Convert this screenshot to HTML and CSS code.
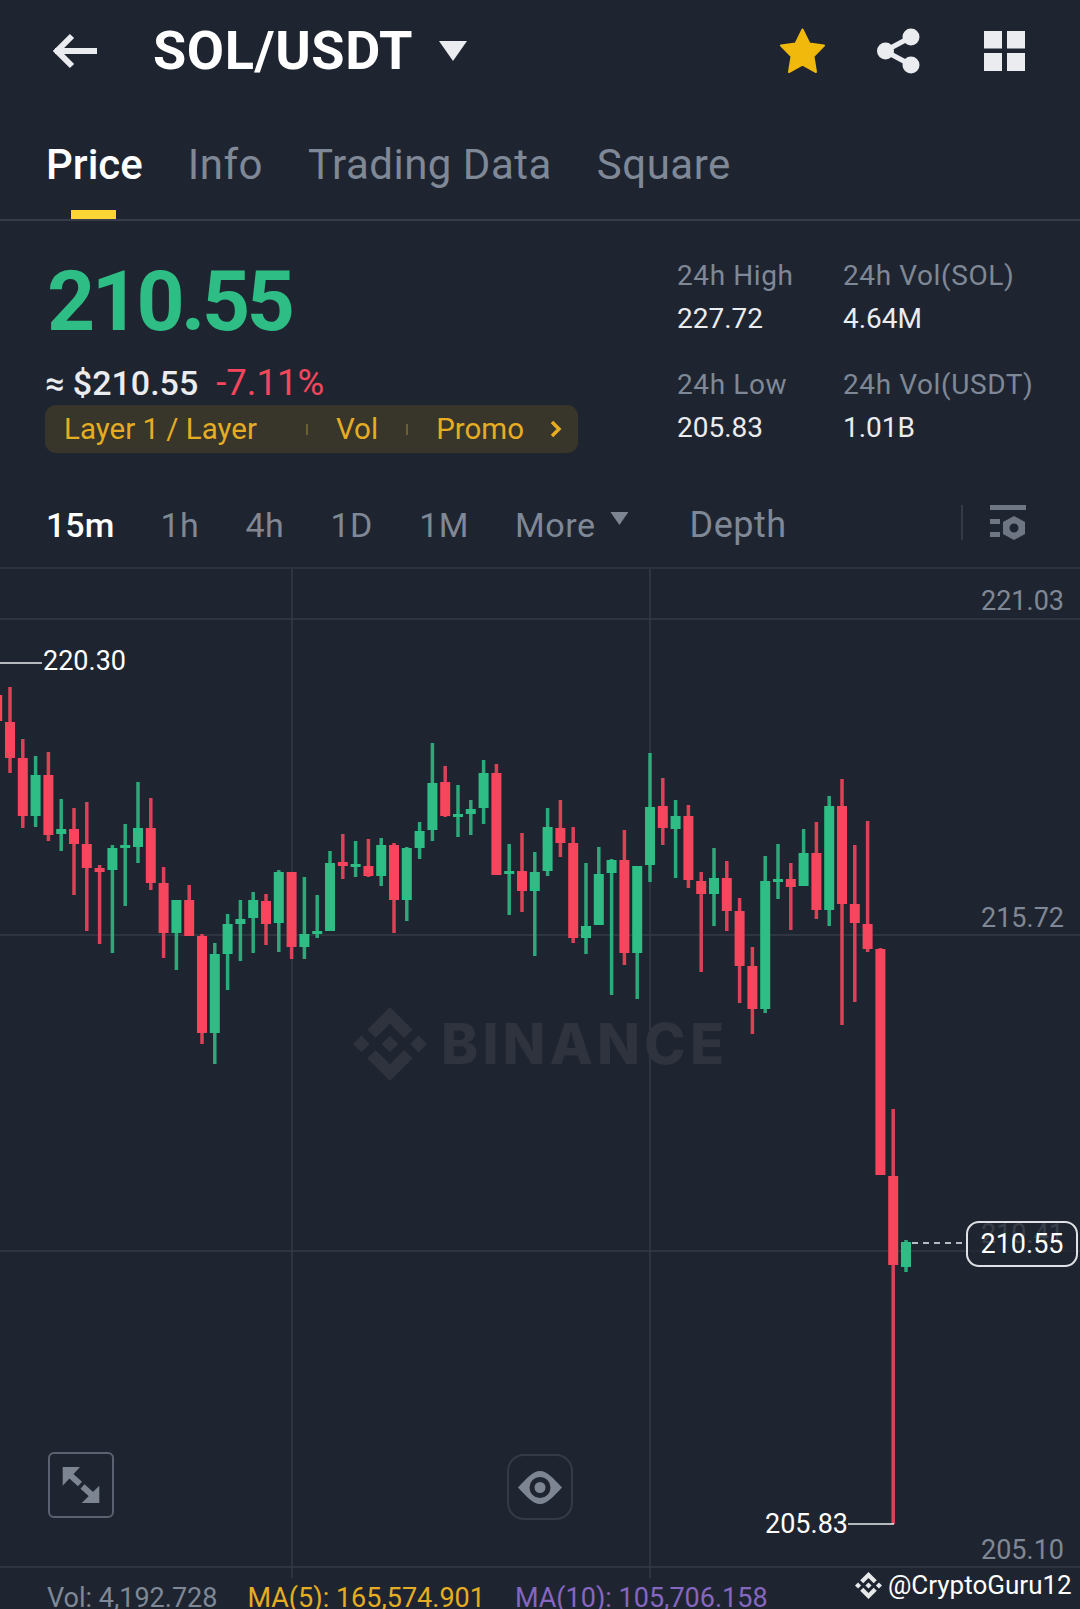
FILE: index.html
```html
<!DOCTYPE html>
<html lang="en">
<head>
    <meta charset="UTF-8">
    <meta name="viewport" content="width=device-width, initial-scale=1.0">
    <title>SOL/USDT</title>
    <link rel="stylesheet" href="styles.css">
</head>
<body>
    <svg class="defs" width="0" height="0">
        <symbol id="bnb" viewBox="0 0 24 24">
            <path d="M16.624 13.9202l2.7175 2.7154-7.353 7.353-7.353-7.352 2.7175-2.7164 4.6355 4.6595 4.6356-4.6595zm4.6366-4.6366L24 12l-2.7154 2.7164L18.5682 12l2.6924-2.7164zm-9.272.001l2.7163 2.6914-2.7164 2.7174v-.001L9.2721 12l2.7164-2.7154zm-9.2722-.001L5.4088 12l-2.6914 2.6924L0 12l2.7164-2.7164zM11.9885.0115l7.353 7.329-2.7174 2.7154-4.6356-4.6356-4.6355 4.6595-2.7174-2.7154 7.353-7.353z"/>
        </symbol>
    </svg>

    <header class="topbar">
        <svg class="back" width="45" height="36" viewBox="0 0 45 36">
            <path d="M3 18H45M20 3L5 18L20 33" fill="none" stroke="#eaecef" stroke-width="6"/>
        </svg>
        <h1 class="pair">SOL/USDT</h1>
        <span class="caret"></span>
        <svg class="star" width="45" height="46" viewBox="0 0 45 46">
            <path d="M22.5 1.5L29.4 15.4L44 17.5L33.5 28.3L36 44L22.5 36.6L9 44L11.5 28.3L1 17.5L15.6 15.4Z" fill="#f0b90b" stroke="#f0b90b" stroke-width="2" stroke-linejoin="round"/>
        </svg>
        <svg class="share" width="43" height="46" viewBox="0 0 43 46">
            <path d="M34 9L8 23L34 37" fill="none" stroke="#eaecef" stroke-width="5"/>
            <circle cx="34" cy="9" r="8.5" fill="#eaecef"/>
            <circle cx="8.5" cy="23" r="8.5" fill="#eaecef"/>
            <circle cx="34" cy="37" r="8.5" fill="#eaecef"/>
        </svg>
        <svg class="apps" width="41" height="40" viewBox="0 0 41 40">
            <rect width="18" height="17.5" fill="#eaecef"/>
            <rect x="23" width="18" height="17.5" fill="#eaecef"/>
            <rect y="22" width="18" height="18" fill="#eaecef"/>
            <rect x="23" y="22" width="18" height="18" fill="#eaecef"/>
        </svg>
    </header>

    <nav class="tabs">
        <a class="tab active">Price</a>
        <a class="tab">Info</a>
        <a class="tab">Trading Data</a>
        <a class="tab">Square</a>
    </nav>

    <section class="summary">
        <div class="quote">
            <div class="last-price">210.55</div>
            <div class="fiat-row">
                <span class="fiat">≈ $210.55</span>
                <span class="change">-7.11%</span>
            </div>
            <div class="tags">
                <span class="tag-first">Layer 1 / Layer</span>
                <i class="tick"></i>
                <span>Vol</span>
                <i class="tick"></i>
                <span>Promo</span>
                <svg class="chevron" width="12" height="18" viewBox="0 0 12 18">
                    <path d="M2 2L9 9L2 16" fill="none" stroke="#e6ad22" stroke-width="3.5"/>
                </svg>
            </div>
        </div>
        <div class="stats">
            <div class="stat"><div class="stat-label">24h High</div><div class="stat-value">227.72</div></div>
            <div class="stat"><div class="stat-label">24h Vol(SOL)</div><div class="stat-value">4.64M</div></div>
            <div class="stat"><div class="stat-label">24h Low</div><div class="stat-value">205.83</div></div>
            <div class="stat"><div class="stat-label">24h Vol(USDT)</div><div class="stat-value">1.01B</div></div>
        </div>
    </section>

    <div class="timeframes">
        <a class="tf active">15m</a>
        <a class="tf">1h</a>
        <a class="tf">4h</a>
        <a class="tf">1D</a>
        <a class="tf">1M</a>
        <a class="tf more">More<span class="caret small"></span></a>
        <a class="tf depth">Depth</a>
        <i class="tf-divider"></i>
        <svg class="tf-settings" width="36" height="35" viewBox="0 0 36 35">
            <rect width="36" height="5" fill="#6f7683"/>
            <rect y="14" width="10" height="5" fill="#6f7683"/>
            <rect y="27" width="10" height="5" fill="#6f7683"/>
            <path fill-rule="evenodd" d="M24 11L35 17V29L24 35L13 29V17ZM24 18.5A4.5 4.5 0 1 0 24 27.5A4.5 4.5 0 1 0 24 18.5Z" fill="#6f7683"/>
        </svg>
    </div>

    <main class="chart">
        <svg class="plot" id="plot" width="1080" height="998" viewBox="0 569 1080 998">
            <g class="grid">
                <line x1="0" y1="619" x2="1080" y2="619"/>
                <line x1="0" y1="935" x2="1080" y2="935"/>
                <line x1="0" y1="1251" x2="1080" y2="1251"/>
                <line x1="0" y1="1567" x2="1080" y2="1567"/>
                <line x1="292" y1="569" x2="292" y2="1578"/>
                <line x1="650" y1="569" x2="650" y2="1578"/>
            </g>
            <use href="#bnb" class="mark" x="353" y="1007" width="74" height="74"/>
            <text class="mark-text" x="441" y="1064">BINANCE</text>
            <text class="axis" x="1064" y="610">221.03</text>
            <text class="axis" x="1064" y="927">215.72</text>
            <text class="axis" x="1064" y="1243">210.41</text>
            <text class="axis" x="1064" y="1559">205.10</text>
            <g id="candles"></g>
            <line class="extreme" x1="0" y1="663" x2="42" y2="663"/>
            <text class="extreme-text" x="43" y="670">220.30</text>
            <line class="extreme" x1="848" y1="1524" x2="894" y2="1524"/>
            <text class="extreme-text" x="765" y="1533">205.83</text>
            <line class="last-line" x1="912" y1="1243" x2="967" y2="1243"/>
        </svg>
        <div class="last-tag">210.55</div>
        <a class="chart-btn expand">
            <svg width="62" height="62" viewBox="0 0 62 62">
                <path d="M12.7 13H30L12.7 31.7Z M49.3 49H31.7L49.3 31.7Z" fill="#7d8593"/>
                <path d="M20 21L30 30M32.5 32.5L42 41" fill="none" stroke="#7d8593" stroke-width="6"/>
            </svg>
        </a>
        <a class="chart-btn eye">
            <svg width="62" height="62" viewBox="0 0 62 62">
                <path d="M9 31.5C18 22 24 15 31 15C38 15 44 22 53 31.5C44 41 38 48 31 48C24 48 18 41 9 31.5Z" fill="#7d8593"/>
                <circle cx="31" cy="31.5" r="8" fill="#7d8593" stroke="#1f2530" stroke-width="5"/>
            </svg>
        </a>
    </main>

    <footer class="legend">
        <span class="vol">Vol: 4,192.728</span>
        <span class="ma5">MA(5): 165,574.901</span>
        <span class="ma10">MA(10): 105,706.158</span>
    </footer>

    <div class="credit">
        <svg width="27" height="27"><use href="#bnb" width="27" height="27"/></svg>
        <span>@CryptoGuru12</span>
    </div>

    <script src="chart.js"></script>
</body>
</html>
```

FILE: styles.css
```css
* {
    box-sizing: border-box;
}

body {
    margin: 0;
    width: 1080px;
    height: 1609px;
    overflow: hidden;
    position: relative;
    background-color: #1f2530;
    font-family: 'Roboto', sans-serif;
    color: #eaecef;
}

.defs {
    position: absolute;
}

.topbar {
    display: flex;
    align-items: center;
    height: 102px;
    padding-left: 52px;
}

.pair {
    margin: 0 0 0 56px;
    width: 286px;
    font-size: 54px;
    font-weight: 700;
    line-height: 60px;
    letter-spacing: 0.6px;
    color: #fff;
}

.caret {
    width: 28px;
    height: 20px;
    background-color: #eaecef;
    clip-path: polygon(0 0, 100% 0, 50% 100%);
}

.caret.small {
    display: inline-block;
    width: 18px;
    height: 13px;
    margin: 0 0 0 15px;
    vertical-align: 12px;
    background-color: #7d8593;
}

.star {
    margin-left: 313px;
}

.share {
    margin-left: 52px;
}

.apps {
    margin-left: 64px;
}

.tabs {
    display: flex;
    gap: 45px;
    height: 119px;
    padding: 39px 0 0 46px;
    border-bottom: 2px solid #363c48;
}

.tab {
    position: relative;
    font-size: 42px;
    line-height: 48px;
    letter-spacing: 0.5px;
    color: #7f8896;
}

.tab.active {
    color: #fff;
    font-weight: 500;
    letter-spacing: 0;
}

.tab.active::after {
    content: "";
    position: absolute;
    left: 25px;
    top: 69px;
    width: 45px;
    height: 9px;
    background-color: #fcd535;
}

.summary {
    display: flex;
    height: 232px;
}

.quote {
    width: 677px;
    padding: 39px 0 0 45px;
}

.last-price {
    padding-left: 2px;
    font-size: 84px;
    font-weight: 700;
    line-height: 84px;
    letter-spacing: -3.5px;
    color: #2ebd85;
}

.fiat-row {
    display: flex;
    gap: 18px;
    margin-top: 19px;
    line-height: 40px;
}

.fiat {
    font-size: 34px;
    font-weight: 500;
}

.change {
    font-size: 36.5px;
    color: #f6465d;
}

.tags {
    display: flex;
    align-items: center;
    width: 533px;
    height: 48px;
    margin-top: 2px;
    padding-left: 19px;
    border-radius: 11px;
    background-color: #38352a;
    font-size: 29.5px;
    color: #e6ad22;
}

.tag-first {
    width: 214px;
    white-space: nowrap;
}

.tick {
    width: 2px;
    height: 11px;
    margin: 0 28px;
    background-color: #6b6032;
}

.chevron {
    margin-left: 26px;
}

.stats {
    display: grid;
    grid-template-columns: 166px 1fr;
    grid-auto-rows: 78px;
    row-gap: 31px;
    padding-top: 37px;
}

.stat-label {
    font-size: 28px;
    line-height: 36px;
    letter-spacing: 0.6px;
    color: #7f8896;
}

.stat-value {
    margin-top: 7px;
    font-size: 28px;
    line-height: 36px;
    color: #eaecef;
}

.timeframes {
    display: flex;
    gap: 46.2px;
    height: 116px;
    padding: 52px 0 0 46px;
    border-bottom: 2px solid #2d333e;
}

.tf {
    font-size: 34px;
    line-height: 40px;
    letter-spacing: 0.5px;
    color: #7f8896;
}

.tf.active {
    color: #fff;
    font-weight: 500;
    letter-spacing: 0;
}

.tf.depth {
    margin-left: 15px;
    font-size: 36px;
}

.tf-divider {
    width: 2px;
    height: 35px;
    margin-left: 128px;
    background-color: #343a46;
}

.tf-settings {
    margin-left: -19px;
}

.chart {
    position: relative;
    height: 998px;
}

.plot {
    position: absolute;
    left: 0;
    top: 0;
    overflow: visible;
}

.grid line {
    stroke: #343a46;
    stroke-width: 1.5;
}

.mark {
    fill: #2e333e;
}

.mark-text {
    font-family: 'Inter', sans-serif;
    font-size: 56px;
    font-weight: 800;
    letter-spacing: 4.2px;
    fill: #2e333e;
}

.axis {
    font-size: 27px;
    text-anchor: end;
    fill: #7f8896;
}

.extreme {
    stroke: #eaecef;
    stroke-width: 1.5;
}

.extreme-text {
    font-size: 27px;
    fill: #fff;
}

.last-line {
    stroke: #eaecef;
    stroke-width: 1.5;
    stroke-dasharray: 6 5;
}

.wick {
    stroke-width: 3.5;
    opacity: 0.88;
}

.up {
    fill: #2ebd85;
    stroke: #2ebd85;
}

.down {
    fill: #f6465d;
    stroke: #f6465d;
}

.up rect,
.down rect {
    stroke: none;
}

.last-tag {
    position: absolute;
    left: 966px;
    top: 652px;
    width: 112px;
    height: 46px;
    border: 2px solid #dfe1e5;
    border-radius: 13px;
    background-color: rgba(31, 37, 48, 0.75);
    font-size: 27px;
    line-height: 42px;
    text-align: center;
    color: #fff;
}

.chart-btn {
    position: absolute;
    display: flex;
    align-items: center;
    justify-content: center;
    width: 66px;
    height: 66px;
}

.expand {
    left: 48px;
    top: 883px;
    border: 2px solid #5a6170;
    border-radius: 6px;
}

.eye {
    left: 507px;
    top: 885px;
    border: 2px solid #343a46;
    border-radius: 17px;
}

.legend {
    display: flex;
    gap: 30px;
    padding: 14px 0 0 47px;
    font-size: 27px;
    line-height: 34px;
    white-space: nowrap;
}

.vol {
    color: #7f8896;
}

.ma5 {
    color: #e6ad22;
}

.ma10 {
    color: #8566c0;
}

.credit {
    position: absolute;
    left: 855px;
    top: 1572px;
    display: flex;
    align-items: center;
    gap: 6px;
    fill: #e6e8ea;
    font-size: 26px;
    line-height: 27px;
    color: #fff;
}
```

FILE: chart.js
```js
// each candle: colour, wick top, body top, body bottom, wick bottom (page y)
const candles = [
    ['d', 680, 695, 721, 735], ['d', 687, 722, 758, 773], ['d', 739, 758, 816, 828], ['u', 756, 775, 816, 827],
    ['d', 752, 775, 835, 841], ['u', 799, 829, 834, 851], ['d', 808, 829, 844, 895], ['d', 802, 844, 868, 931],
    ['d', 865, 868, 872, 944], ['u', 845, 848, 870, 953], ['u', 824, 845, 848, 906], ['u', 782, 828, 847, 863],
    ['d', 798, 828, 883, 890], ['d', 867, 883, 933, 958], ['u', 900, 900, 933, 970], ['d', 885, 900, 936, 936],
    ['d', 934, 936, 1033, 1044], ['u', 943, 954, 1033, 1064], ['u', 914, 924, 954, 990], ['u', 900, 919, 924, 961],
    ['u', 892, 900, 918, 953], ['d', 894, 901, 924, 945], ['u', 870, 872, 923, 952], ['d', 872, 872, 947, 959],
    ['u', 877, 934, 947, 959], ['u', 895, 931, 934, 938], ['u', 851, 863, 931, 931], ['d', 834, 862, 866, 879],
    ['u', 841, 864, 867, 877], ['d', 839, 866, 876, 877], ['u', 838, 845, 876, 886], ['d', 843, 845, 900, 933],
    ['u', 847, 848, 900, 921], ['u', 822, 831, 848, 859], ['u', 743, 783, 830, 841], ['d', 766, 782, 816, 817],
    ['u', 785, 814, 817, 837], ['u', 800, 809, 814, 835], ['u', 760, 773, 808, 824], ['d', 764, 773, 875, 875],
    ['u', 844, 871, 874, 915], ['d', 833, 871, 891, 912], ['u', 852, 872, 891, 956], ['u', 808, 827, 871, 876],
    ['d', 800, 828, 843, 857], ['d', 827, 843, 938, 943], ['u', 863, 926, 938, 954], ['u', 847, 874, 925, 925],
    ['u', 859, 860, 873, 995], ['d', 830, 860, 953, 965], ['u', 866, 866, 953, 999], ['u', 753, 807, 865, 882],
    ['d', 778, 806, 828, 845], ['u', 800, 816, 829, 878], ['d', 805, 816, 880, 888], ['d', 872, 881, 894, 972],
    ['u', 848, 878, 894, 926], ['d', 861, 878, 911, 931], ['d', 898, 911, 966, 1003], ['d', 947, 966, 1009, 1034],
    ['u', 856, 881, 1009, 1013], ['u', 844, 879, 882, 899], ['d', 863, 879, 887, 930], ['u', 829, 853, 886, 886],
    ['d', 822, 853, 910, 919], ['u', 796, 806, 910, 926], ['d', 779, 806, 904, 1025], ['d', 845, 904, 923, 1002],
    ['d', 821, 924, 949, 952], ['d', 948, 949, 1175, 1175], ['d', 1109, 1176, 1265, 1524], ['u', 1240, 1242, 1267, 1272]
];

const layer = document.getElementById('candles');
const NS = 'http://www.w3.org/2000/svg';

candles.forEach((c, i) => {
    const x = -2.8 + 12.8 * i;
    const group = document.createElementNS(NS, 'g');
    group.setAttribute('class', c[0] === 'u' ? 'up' : 'down');

    const wick = document.createElementNS(NS, 'line');
    wick.setAttribute('class', 'wick');
    wick.setAttribute('x1', x);
    wick.setAttribute('x2', x);
    wick.setAttribute('y1', c[1]);
    wick.setAttribute('y2', c[4]);

    const body = document.createElementNS(NS, 'rect');
    body.setAttribute('x', x - 5);
    body.setAttribute('y', c[2]);
    body.setAttribute('width', 10);
    body.setAttribute('height', c[3] - c[2]);

    group.appendChild(wick);
    group.appendChild(body);
    layer.appendChild(group);
});
```
